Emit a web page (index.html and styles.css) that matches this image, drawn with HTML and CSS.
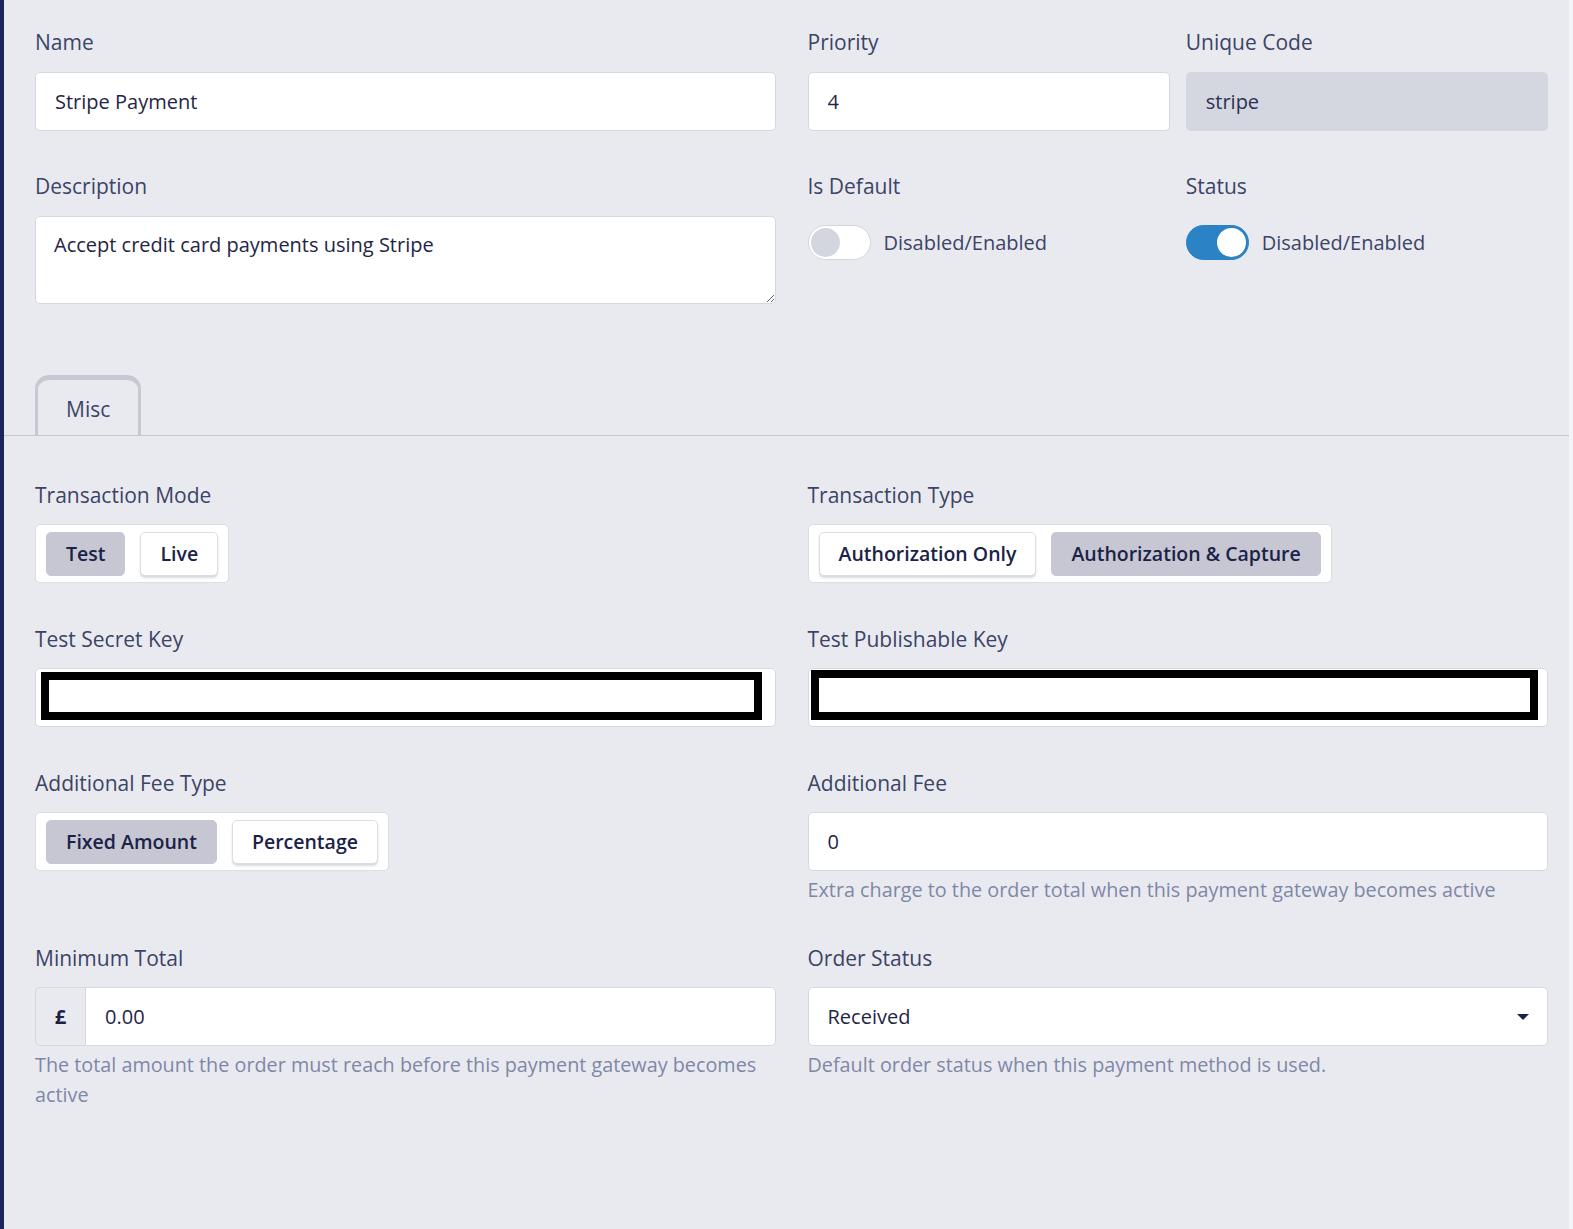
FILE: index.html
```html
<!DOCTYPE html>
<html lang="en">
<head>
<meta charset="utf-8">
<title>Stripe Payment</title>
<link rel="stylesheet" href="styles.css">
</head>
<body>
<div class="app">
  <aside class="rail"></aside>
  <main class="main">
    <section class="top">
      <div class="grid2">
        <div class="col">
          <div class="group">
            <label class="lbl">Name</label>
            <input class="ctl" type="text" value="Stripe Payment">
          </div>
          <div class="group last">
            <label class="lbl">Description</label>
            <textarea class="ctl area">Accept credit card payments using Stripe</textarea>
          </div>
        </div>
        <div class="col">
          <div class="grid2 tight">
            <div class="group">
              <label class="lbl">Priority</label>
              <input class="ctl" type="text" value="4">
            </div>
            <div class="group">
              <label class="lbl">Unique Code</label>
              <input class="ctl disabled" type="text" value="stripe" disabled>
            </div>
            <div class="group last">
              <label class="lbl">Is Default</label>
              <div class="switch-row">
                <span class="switch"><span class="knob"></span></span>
                <span class="switch-text">Disabled/Enabled</span>
              </div>
            </div>
            <div class="group last">
              <label class="lbl">Status</label>
              <div class="switch-row">
                <span class="switch on"><span class="knob"></span></span>
                <span class="switch-text">Disabled/Enabled</span>
              </div>
            </div>
          </div>
        </div>
      </div>
    </section>

    <nav class="tabs">
      <div class="tab">Misc</div>
    </nav>

    <section class="pane">
      <div class="grid2 pane-grid">
        <div class="group">
          <label class="lbl">Transaction Mode</label>
          <div class="btn-group">
            <span class="btn active">Test</span>
            <span class="btn">Live</span>
          </div>
        </div>
        <div class="group">
          <label class="lbl">Transaction Type</label>
          <div class="btn-group">
            <span class="btn">Authorization Only</span>
            <span class="btn active">Authorization &amp; Capture</span>
          </div>
        </div>

        <div class="group">
          <label class="lbl">Test Secret Key</label>
          <div class="ctl key">
            <span class="redact redact-left"></span>
          </div>
        </div>
        <div class="group">
          <label class="lbl">Test Publishable Key</label>
          <div class="ctl key">
            <span class="redact redact-right"></span>
          </div>
        </div>

        <div class="group">
          <label class="lbl">Additional Fee Type</label>
          <div class="btn-group">
            <span class="btn active">Fixed Amount</span>
            <span class="btn">Percentage</span>
          </div>
        </div>
        <div class="group has-help">
          <label class="lbl">Additional Fee</label>
          <input class="ctl" type="text" value="0">
          <p class="help">Extra charge to the order total when this payment gateway becomes active</p>
        </div>

        <div class="group last">
          <label class="lbl">Minimum Total</label>
          <div class="input-group">
            <span class="prepend">£</span>
            <input class="ctl grow" type="text" value="0.00">
          </div>
          <p class="help">The total amount the order must reach before this payment gateway becomes active</p>
        </div>
        <div class="group last">
          <label class="lbl">Order Status</label>
          <div class="ctl select">
            <span>Received</span>
            <svg class="caret" width="12" height="6" viewBox="0 0 12 6"><path d="M0 0H12L6 6Z" fill="#1c2348"/></svg>
          </div>
          <p class="help">Default order status when this payment method is used.</p>
        </div>
      </div>
    </section>
  </main>
  <div class="edge"></div>
</div>
</body>
</html>
```

FILE: styles.css
```css
* { box-sizing: border-box; }

html, body {
  margin: 0;
  padding: 0;
}

body {
  font-family: "Open Sans", "Noto Sans", "Liberation Sans", sans-serif;
  font-size: 21px;
  line-height: 30px;
  color: #3c4466;
  background: #e9eaf0;
}

.app {
  display: flex;
  min-height: 1229px;
}

.rail {
  width: 4px;
  flex: 0 0 4px;
  background: #1b2756;
}

.edge {
  width: 4px;
  flex: 0 0 4px;
  background: #f3f4f7;
}

.main {
  flex: 1;
  min-width: 0;
  background: #e9eaf0;
}

.top {
  padding: 27px 21px 0 31px;
}

.grid2 {
  display: grid;
  grid-template-columns: 1fr 1fr;
  column-gap: 32px;
  align-items: start;
}

.grid2.tight {
  column-gap: 16px;
}

.group {
  display: flex;
  flex-direction: column;
  margin-bottom: 40px;
}

.pane .group {
  margin-bottom: 41px;
}

.pane .group.has-help {
  margin-bottom: 38px;
}

.group.last,
.pane .group.last {
  margin-bottom: 0;
}

.lbl {
  display: block;
  font-size: 21px;
  line-height: 30px;
  color: #3c4466;
  margin-bottom: 15px;
}

.pane .lbl {
  margin-bottom: 14px;
}

.ctl {
  display: block;
  width: 100%;
  height: 59px;
  margin: 0;
  padding: 0 19px;
  font-family: inherit;
  font-size: 20px;
  line-height: 30px;
  color: #1f2545;
  background: #ffffff;
  border: 1px solid #d6d8e1;
  border-radius: 5px;
  outline: none;
}

.ctl.disabled {
  background: #d5d7e0;
  border-color: #d5d7e0;
  color: #2a3152;
}

.ctl.area {
  height: 88px;
  padding: 13px 18px;
  resize: vertical;
}

.switch-row {
  display: flex;
  align-items: center;
  gap: 13px;
  margin-top: 9px;
}

.switch {
  position: relative;
  display: block;
  width: 63px;
  height: 35px;
  border-radius: 18px;
  background: #ffffff;
  border: 1px solid #d3d6df;
}

.switch .knob {
  position: absolute;
  top: 2px;
  left: 2px;
  width: 29px;
  height: 29px;
  border-radius: 50%;
  background: #d3d6df;
}

.switch.on {
  background: #2b82c4;
  border-color: #2b82c4;
}

.switch.on .knob {
  left: auto;
  right: 2px;
  background: #ffffff;
}

.switch-text {
  font-size: 20px;
  color: #3c4466;
}

.tabs {
  margin-top: 71px;
  padding-left: 31px;
  border-bottom: 1px solid #c7c8d3;
  display: flex;
}

.tab {
  height: 60px;
  padding: 14px 28px 11px;
  border: 3px solid #c7c8d3;
  border-top-width: 5px;
  border-bottom: 0;
  border-radius: 14px 14px 0 0;
  color: #3c4466;
  line-height: 30px;
}

.pane {
  padding: 44px 21px 0 31px;
}

.btn-group {
  display: flex;
  align-self: flex-start;
  align-items: center;
  gap: 15px;
  height: 59px;
  padding: 0 10px;
  background: #ffffff;
  border: 1px solid #dcdde5;
  border-radius: 5px;
}

.btn {
  display: flex;
  align-items: center;
  height: 44px;
  padding: 0 19px;
  font-size: 19.5px;
  font-weight: 600;
  color: #1b2247;
  background: #ffffff;
  border: 1px solid #dcdde6;
  border-radius: 5px;
  box-shadow: 0 2px 2px rgba(40, 50, 90, 0.18);
}

.btn.active {
  background: #c6c7d3;
  border-color: #c6c7d3;
  box-shadow: none;
}

.ctl.key {
  position: relative;
  padding: 0;
}

.redact {
  position: absolute;
  border: 8px solid #000000;
  background: #ffffff;
}

.redact-left {
  left: 5px;
  right: 13px;
  top: 3px;
  bottom: 6px;
}

.redact-right {
  left: 2px;
  right: 9px;
  top: 1px;
  bottom: 6px;
}

.help {
  margin: 4px 0 0;
  font-size: 19.8px;
  line-height: 30px;
  color: #7f87a6;
}

.input-group {
  display: flex;
  width: 100%;
}

.prepend {
  flex: 0 0 50px;
  height: 59px;
  display: flex;
  align-items: center;
  justify-content: center;
  font-size: 20px;
  font-weight: 700;
  color: #1b2247;
  background: #e9eaf0;
  border: 1px solid #d6d8e1;
  border-right: 0;
  border-radius: 5px 0 0 5px;
}

.ctl.grow {
  flex: 1;
  width: auto;
  min-width: 0;
  border-radius: 0 5px 5px 0;
}

.ctl.select {
  display: flex;
  align-items: center;
  justify-content: space-between;
  padding: 0 18px 0 19px;
}

.caret {
  display: block;
}
```
